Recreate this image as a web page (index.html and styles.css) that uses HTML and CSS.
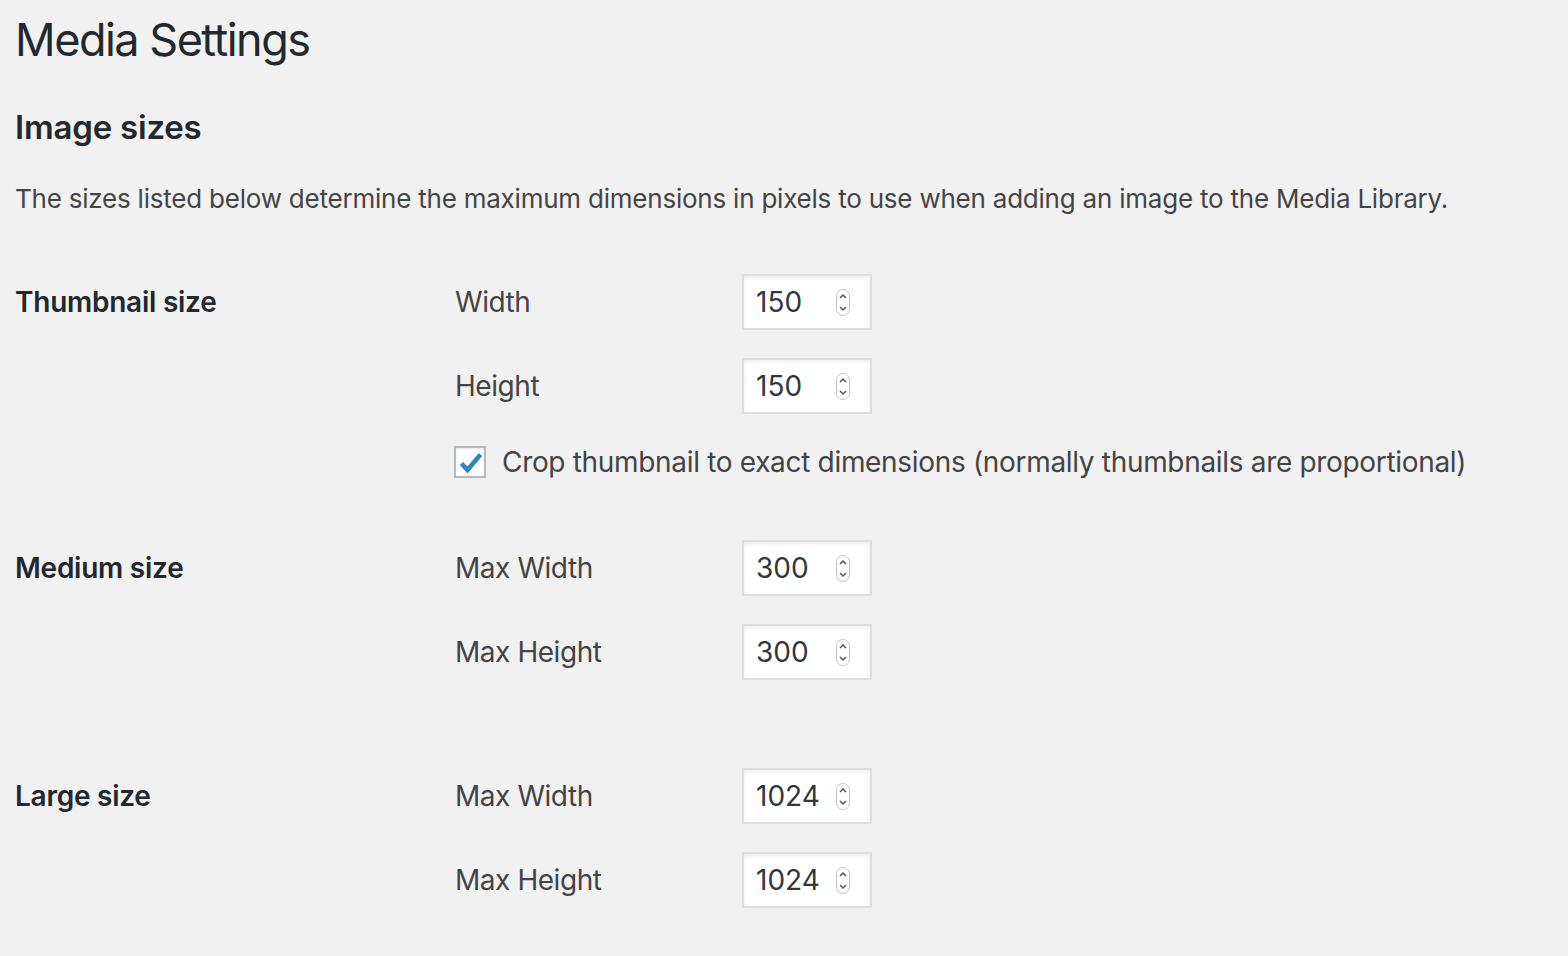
FILE: index.html
```html
<!DOCTYPE html>
<html lang="en">
<head>
<meta charset="utf-8">
<title>Media Settings</title>
<link rel="stylesheet" href="styles.css">
</head>
<body>
<div class="wrap">
  <h1 class="page-title">Media Settings</h1>
  <h2 class="section-title">Image sizes</h2>
  <p class="desc">The sizes listed below determine the maximum dimensions in pixels to use when adding an image to the Media Library.</p>

  <div class="size-group group-thumb">
    <div class="group-label">Thumbnail size</div>
    <div class="group-fields">
      <div class="field-row">
        <span class="field-label">Width</span>
        <div class="num-input"><span class="num-value">150</span><span class="spinner"><svg viewBox="0 0 14 27" width="14" height="27"><rect x="0.5" y="0.5" width="13" height="26" rx="6.5" ry="6.5" fill="#fff" stroke="#c4c4c4"/><path d="M4 9 L7 6 L10 9" fill="none" stroke="#555" stroke-width="1.5"/><path d="M4 18 L7 21 L10 18" fill="none" stroke="#555" stroke-width="1.5"/></svg></span></div>
      </div>
      <div class="field-row">
        <span class="field-label">Height</span>
        <div class="num-input"><span class="num-value">150</span><span class="spinner"><svg viewBox="0 0 14 27" width="14" height="27"><rect x="0.5" y="0.5" width="13" height="26" rx="6.5" ry="6.5" fill="#fff" stroke="#c4c4c4"/><path d="M4 9 L7 6 L10 9" fill="none" stroke="#555" stroke-width="1.5"/><path d="M4 18 L7 21 L10 18" fill="none" stroke="#555" stroke-width="1.5"/></svg></span></div>
      </div>
      <div class="field-row check-row">
        <span class="checkbox"><svg viewBox="0 0 28 28" width="28" height="28"><path d="M5.5 15.5 L11.5 22 L24.5 6.5" fill="none" stroke="#2f86c4" stroke-width="4.6" stroke-linejoin="miter" stroke-linecap="butt"/></svg></span>
        <span class="check-label">Crop thumbnail to exact dimensions (normally thumbnails are proportional)</span>
      </div>
    </div>
  </div>

  <div class="size-group group-medium">
    <div class="group-label">Medium size</div>
    <div class="group-fields">
      <div class="field-row">
        <span class="field-label">Max Width</span>
        <div class="num-input"><span class="num-value">300</span><span class="spinner"><svg viewBox="0 0 14 27" width="14" height="27"><rect x="0.5" y="0.5" width="13" height="26" rx="6.5" ry="6.5" fill="#fff" stroke="#c4c4c4"/><path d="M4 9 L7 6 L10 9" fill="none" stroke="#555" stroke-width="1.5"/><path d="M4 18 L7 21 L10 18" fill="none" stroke="#555" stroke-width="1.5"/></svg></span></div>
      </div>
      <div class="field-row">
        <span class="field-label">Max Height</span>
        <div class="num-input"><span class="num-value">300</span><span class="spinner"><svg viewBox="0 0 14 27" width="14" height="27"><rect x="0.5" y="0.5" width="13" height="26" rx="6.5" ry="6.5" fill="#fff" stroke="#c4c4c4"/><path d="M4 9 L7 6 L10 9" fill="none" stroke="#555" stroke-width="1.5"/><path d="M4 18 L7 21 L10 18" fill="none" stroke="#555" stroke-width="1.5"/></svg></span></div>
      </div>
    </div>
  </div>

  <div class="size-group group-large">
    <div class="group-label">Large size</div>
    <div class="group-fields">
      <div class="field-row">
        <span class="field-label">Max Width</span>
        <div class="num-input"><span class="num-value">1024</span><span class="spinner"><svg viewBox="0 0 14 27" width="14" height="27"><rect x="0.5" y="0.5" width="13" height="26" rx="6.5" ry="6.5" fill="#fff" stroke="#c4c4c4"/><path d="M4 9 L7 6 L10 9" fill="none" stroke="#555" stroke-width="1.5"/><path d="M4 18 L7 21 L10 18" fill="none" stroke="#555" stroke-width="1.5"/></svg></span></div>
      </div>
      <div class="field-row">
        <span class="field-label">Max Height</span>
        <div class="num-input"><span class="num-value">1024</span><span class="spinner"><svg viewBox="0 0 14 27" width="14" height="27"><rect x="0.5" y="0.5" width="13" height="26" rx="6.5" ry="6.5" fill="#fff" stroke="#c4c4c4"/><path d="M4 9 L7 6 L10 9" fill="none" stroke="#555" stroke-width="1.5"/><path d="M4 18 L7 21 L10 18" fill="none" stroke="#555" stroke-width="1.5"/></svg></span></div>
      </div>
    </div>
  </div>
</div>
</body>
</html>
```

FILE: styles.css
```css
html, body {
  margin: 0;
  padding: 0;
  background: #f1f1f1;
}

body {
  font-family: "Inter", "Noto Sans", "Liberation Sans", sans-serif;
  color: #444;
  overflow: hidden;
}

.wrap {
  padding: 12px 0 0 15px;
}

.page-title {
  margin: 0;
  font-size: 45px;
  line-height: 56px;
  font-weight: 400;
  color: #23282d;
  letter-spacing: -1.5px;
}

.section-title {
  margin: 39px 0 0;
  font-size: 33px;
  line-height: 40px;
  font-weight: 600;
  color: #23282d;
  letter-spacing: -0.2px;
}

.desc {
  margin: 34px 0 0;
  font-size: 26px;
  line-height: 36px;
  color: #444;
  letter-spacing: -0.22px;
}

.size-group {
  display: flex;
}

.group-thumb { margin-top: 57px; }
.group-medium { margin-top: 50px; }
.group-large { margin-top: 88px; }

.group-label {
  width: 440px;
  flex: none;
  font-size: 28px;
  line-height: 56px;
  font-weight: 600;
  color: #23282d;
  letter-spacing: -0.25px;
}

.group-fields {
  display: flex;
  flex-direction: column;
  gap: 28px;
}

.field-row {
  display: flex;
  align-items: center;
  height: 56px;
}

.field-label {
  width: 287px;
  flex: none;
  font-size: 28px;
  line-height: 56px;
  color: #444;
  letter-spacing: -0.45px;
}

.num-input {
  box-sizing: border-box;
  width: 130px;
  height: 56px;
  border: 2px solid #ddd;
  background: #fff;
  box-shadow: inset 0 2px 4px rgba(0, 0, 0, 0.07);
  display: flex;
  align-items: center;
  padding: 0 20px 0 12px;
  justify-content: space-between;
}

.num-value {
  font-size: 28px;
  line-height: 52px;
  color: #32373c;
}

.spinner {
  display: flex;
  width: 14px;
  height: 27px;
  margin-top: 1px;
}

.check-row {
  margin-top: -8px;
  margin-left: -1px;
}

.checkbox {
  box-sizing: border-box;
  width: 32px;
  height: 32px;
  border: 2px solid #b4b9be;
  background: #fff;
  box-shadow: inset 0 1px 2px rgba(0, 0, 0, 0.1);
  display: flex;
  align-items: center;
  justify-content: center;
  margin-right: 16px;
  flex: none;
}

.check-label {
  font-size: 28px;
  line-height: 56px;
  color: #444;
  letter-spacing: -0.32px;
}
```
